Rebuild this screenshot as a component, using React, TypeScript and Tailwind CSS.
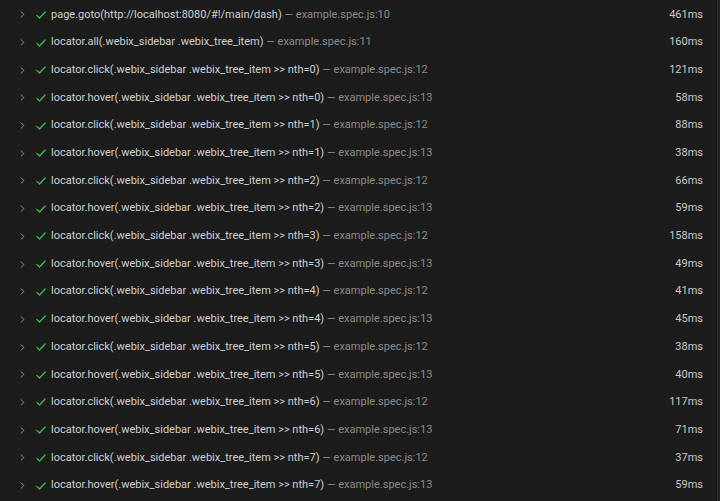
import { ChevronRight } from "lucide-react"

type Step = { title: string; loc: string; ms: string }

const steps: Step[] = [
  { title: "page.goto(http://localhost:8080/#!/main/dash)", loc: "example.spec.js:10", ms: "461ms" },
  { title: "locator.all(.webix_sidebar .webix_tree_item)", loc: "example.spec.js:11", ms: "160ms" },
  { title: "locator.click(.webix_sidebar .webix_tree_item >> nth=0)", loc: "example.spec.js:12", ms: "121ms" },
  { title: "locator.hover(.webix_sidebar .webix_tree_item >> nth=0)", loc: "example.spec.js:13", ms: "58ms" },
  { title: "locator.click(.webix_sidebar .webix_tree_item >> nth=1)", loc: "example.spec.js:12", ms: "88ms" },
  { title: "locator.hover(.webix_sidebar .webix_tree_item >> nth=1)", loc: "example.spec.js:13", ms: "38ms" },
  { title: "locator.click(.webix_sidebar .webix_tree_item >> nth=2)", loc: "example.spec.js:12", ms: "66ms" },
  { title: "locator.hover(.webix_sidebar .webix_tree_item >> nth=2)", loc: "example.spec.js:13", ms: "59ms" },
  { title: "locator.click(.webix_sidebar .webix_tree_item >> nth=3)", loc: "example.spec.js:12", ms: "158ms" },
  { title: "locator.hover(.webix_sidebar .webix_tree_item >> nth=3)", loc: "example.spec.js:13", ms: "49ms" },
  { title: "locator.click(.webix_sidebar .webix_tree_item >> nth=4)", loc: "example.spec.js:12", ms: "41ms" },
  { title: "locator.hover(.webix_sidebar .webix_tree_item >> nth=4)", loc: "example.spec.js:13", ms: "45ms" },
  { title: "locator.click(.webix_sidebar .webix_tree_item >> nth=5)", loc: "example.spec.js:12", ms: "38ms" },
  { title: "locator.hover(.webix_sidebar .webix_tree_item >> nth=5)", loc: "example.spec.js:13", ms: "40ms" },
  { title: "locator.click(.webix_sidebar .webix_tree_item >> nth=6)", loc: "example.spec.js:12", ms: "117ms" },
  { title: "locator.hover(.webix_sidebar .webix_tree_item >> nth=6)", loc: "example.spec.js:13", ms: "71ms" },
  { title: "locator.click(.webix_sidebar .webix_tree_item >> nth=7)", loc: "example.spec.js:12", ms: "37ms" },
  { title: "locator.hover(.webix_sidebar .webix_tree_item >> nth=7)", loc: "example.spec.js:13", ms: "59ms" },
]

function Check() {
  return (
    <svg width="12" height="12" viewBox="0 0 16 16" className="shrink-0">
      <path d="M2.5 8.5l3.5 3.5 7.5-8" fill="none" stroke="#3fb950" strokeWidth="1.8" strokeLinecap="round" strokeLinejoin="round" />
    </svg>
  )
}

function StepRow({ step }: { step: Step }) {
  return (
    <div className="flex h-[27.7px] items-center pl-[17px] pr-[14px]">
      <ChevronRight size={11} strokeWidth={2} className="shrink-0 text-[#9a9a9a]" />
      <div className="ml-[7px]">
        <Check />
      </div>
      <div className="ml-[4px] flex-1 truncate">
        <span className="text-[#d0d0d0]">{step.title}</span>
        <span className="text-[#8b8b8b]"> — {step.loc}</span>
      </div>
      <span className="text-[#c8c8c8]">{step.ms}</span>
    </div>
  )
}

export default function App() {
  return (
    <div
      className="flex h-[501px] w-[720px] overflow-hidden bg-[#1c1c1c] text-[11px]"
      style={{ fontFamily: "Roboto, 'Noto Sans', sans-serif" }}
    >
      <div className="flex-1 pt-[1px]">
        {steps.map((s, i) => (
          <StepRow key={i} step={s} />
        ))}
      </div>
      <div className="w-[3px] border-l border-[#2e2e2e] bg-[#232323]" />
    </div>
  )
}
